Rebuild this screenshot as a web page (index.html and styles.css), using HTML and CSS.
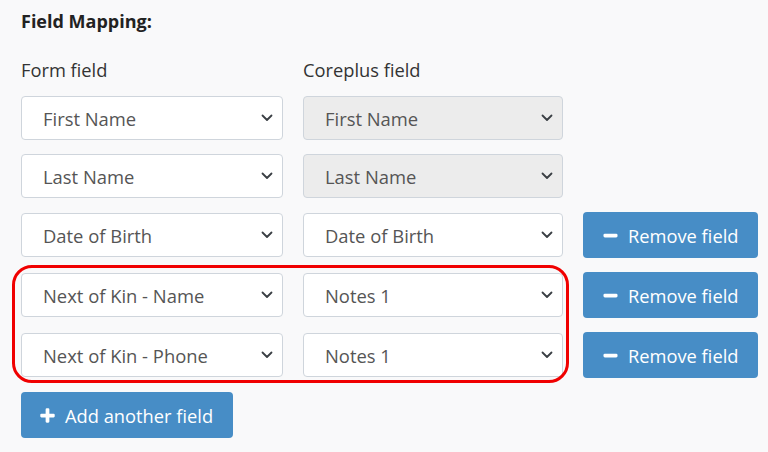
FILE: index.html
```html
<!DOCTYPE html>
<html>
<head>
<meta charset="utf-8">
<link rel="stylesheet" href="styles.css">
</head>
<body>
<div class="page">
  <h3 class="title">Field Mapping:</h3>
  <div class="mapping">
    <div class="row labels">
      <div class="col-form">Form field</div>
      <div class="col-core">Coreplus field</div>
    </div>
    <div class="row">
      <div class="select"><span>First Name</span><svg class="chev" viewBox="0 0 12 8"><path d="M1.5 1.5 6 6l4.5-4.5"/></svg></div>
      <div class="select disabled core"><span>First Name</span><svg class="chev" viewBox="0 0 12 8"><path d="M1.5 1.5 6 6l4.5-4.5"/></svg></div>
    </div>
    <div class="row">
      <div class="select"><span>Last Name</span><svg class="chev" viewBox="0 0 12 8"><path d="M1.5 1.5 6 6l4.5-4.5"/></svg></div>
      <div class="select disabled core"><span>Last Name</span><svg class="chev" viewBox="0 0 12 8"><path d="M1.5 1.5 6 6l4.5-4.5"/></svg></div>
    </div>
    <div class="row">
      <div class="select"><span>Date of Birth</span><svg class="chev" viewBox="0 0 12 8"><path d="M1.5 1.5 6 6l4.5-4.5"/></svg></div>
      <div class="select core"><span>Date of Birth</span><svg class="chev" viewBox="0 0 12 8"><path d="M1.5 1.5 6 6l4.5-4.5"/></svg></div>
      <button class="btn"><svg class="ico" viewBox="0 0 16 16"><rect x="0.5" y="6" width="15" height="4" rx="1.5"/></svg><span>Remove field</span></button>
    </div>
    <div class="highlight-group">
      <div class="row">
        <div class="select"><span>Next of Kin - Name</span><svg class="chev" viewBox="0 0 12 8"><path d="M1.5 1.5 6 6l4.5-4.5"/></svg></div>
        <div class="select core"><span>Notes 1</span><svg class="chev" viewBox="0 0 12 8"><path d="M1.5 1.5 6 6l4.5-4.5"/></svg></div>
        <button class="btn"><svg class="ico" viewBox="0 0 16 16"><rect x="0.5" y="6" width="15" height="4" rx="1.5"/></svg><span>Remove field</span></button>
      </div>
      <div class="row">
        <div class="select"><span>Next of Kin - Phone</span><svg class="chev" viewBox="0 0 12 8"><path d="M1.5 1.5 6 6l4.5-4.5"/></svg></div>
        <div class="select core"><span>Notes 1</span><svg class="chev" viewBox="0 0 12 8"><path d="M1.5 1.5 6 6l4.5-4.5"/></svg></div>
        <button class="btn"><svg class="ico" viewBox="0 0 16 16"><rect x="0.5" y="6" width="15" height="4" rx="1.5"/></svg><span>Remove field</span></button>
      </div>
      <div class="ring"></div>
    </div>
    <div class="row">
      <button class="btn add"><svg class="ico" viewBox="0 0 16 16"><path d="M6 1.5a1.2 1.2 0 0 1 1.2-1.2h1.6A1.2 1.2 0 0 1 10 1.5V6h4.5a1.2 1.2 0 0 1 1.2 1.2v1.6A1.2 1.2 0 0 1 14.5 10H10v4.5a1.2 1.2 0 0 1-1.2 1.2H7.2A1.2 1.2 0 0 1 6 14.5V10H1.5A1.2 1.2 0 0 1 .3 8.8V7.2A1.2 1.2 0 0 1 1.5 6H6z"/></svg><span>Add another field</span></button>
    </div>
  </div>
</div>
</body>
</html>
```
FILE: styles.css
```css
* { box-sizing: border-box; }
html, body { margin: 0; padding: 0; }
body {
  background: #f9f9fa;
  font-family: "Open Sans", "Liberation Sans", sans-serif;
  color: #333;
  width: 768px;
  height: 452px;
  overflow: hidden;
}
.page {
  padding: 9px 0 0 21px;
}
.title {
  margin: 0;
  font-size: 18px;
  line-height: 24px;
  font-weight: 700;
  color: #222;
}
.mapping {
  margin-top: 25px;
  display: flex;
  flex-direction: column;
  gap: 14px;
}
.highlight-group {
  position: relative;
  display: flex;
  flex-direction: column;
  gap: 14px;
}
.row {
  display: flex;
  align-items: center;
  gap: 20px;
}
.labels {
  font-size: 18.3px;
  line-height: 24px;
  color: #333;
}
.col-form { width: 262px; }
.col-core { width: 260px; }
.select {
  width: 262px;
  height: 44px;
  background: #fff;
  border: 1px solid #cfd5dc;
  border-radius: 4px;
  display: flex;
  align-items: center;
  justify-content: space-between;
  padding: 0 9px 0 21px;
  font-size: 18.4px;
  color: #555;
}
.select.core { width: 260px; }
.select.disabled { background: #ececec; }
.chev {
  width: 12px;
  height: 8px;
  fill: none;
  stroke: #3a3f44;
  stroke-width: 1.8;
  stroke-linecap: round;
  stroke-linejoin: round;
}
.btn {
  height: 46px;
  border: none;
  border-radius: 4px;
  background: #478dc6;
  color: #fff;
  font-family: "Open Sans", "Liberation Sans", sans-serif;
  font-size: 18.3px;
  white-space: nowrap;
  display: flex;
  align-items: center;
  gap: 10px;
  padding: 0 0 0 20px;
  width: 175px;
}
.btn.add {
  width: 212px;
  padding-left: 19px;
}
.ico {
  width: 15px;
  height: 15px;
  fill: #fff;
  flex: none;
}
.ring {
  position: absolute;
  left: -9px;
  top: -7px;
  width: 557px;
  bottom: -5px;
  border: 3px solid #f00000;
  border-radius: 20px;
  pointer-events: none;
}
```
